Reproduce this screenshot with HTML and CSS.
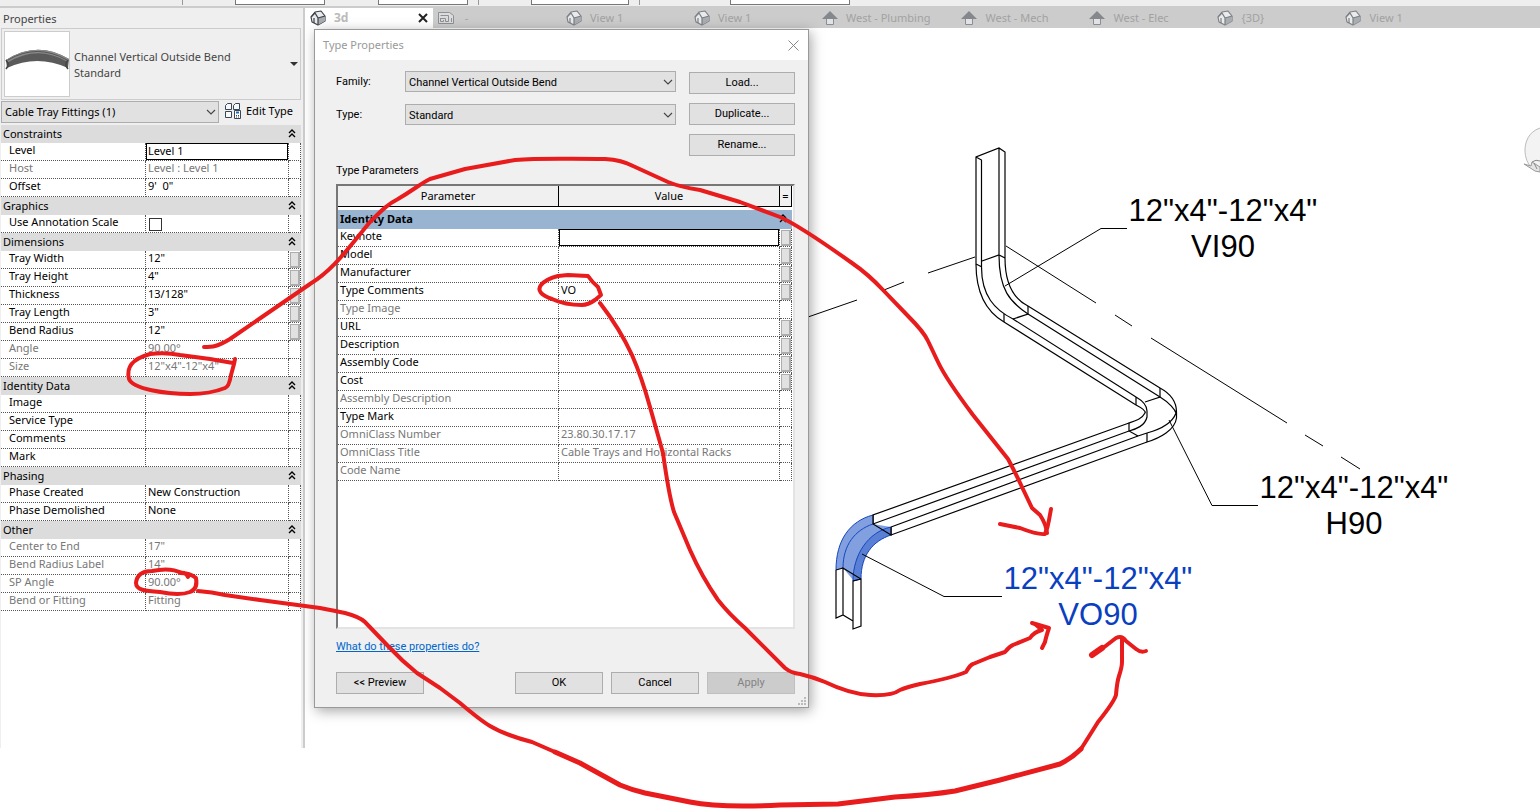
FILE: index.html
```html
<!DOCTYPE html>
<html lang="en">
<head>
  <meta charset="UTF-8" />
  <title>Type Properties</title>
  <link rel="stylesheet" href="styles.css">
</head>
<body>

  <!-- shared icons -->
  <svg class="defs" aria-hidden="true">
    <symbol id="collapse" viewBox="0 0 8 9"><path d="M1 4 4 1 7 4M1 8 4 5 7 8" fill="none" stroke="#000" stroke-width="1.4"/></symbol>
    <symbol id="chevron" viewBox="0 0 10 6"><path d="M1 1 5 5 9 1" fill="none" stroke="#444" stroke-width="1.1"/></symbol>
    <symbol id="house3d" viewBox="0 0 16 16">
      <path d="M1 7 5 2 11 1 15 6V11L8 15 2 12Z" fill="#e8eaec" stroke="currentColor" stroke-width="1.2" stroke-linejoin="round"/>
      <path d="M8 8 15 6V11L8 15Z" fill="#a9adb2"/>
      <path d="M1 7 5 3 8 8V15M8 8 15 6M4 13V8" fill="none" stroke="currentColor" stroke-width="1.2"/>
    </symbol>
    <symbol id="elevation" viewBox="0 0 16 16">
      <path d="M4.500 8H11.500V14.500H4.500Z" fill="#e0e2e6" stroke="#8a8d92"/>
      <path d="M8 1 16 9H0Z" fill="#84878c"/>
    </symbol>
    <symbol id="sheet" viewBox="0 0 16 16">
      <path d="M0.500 2.500H11.500L15.500 5.500V13.500H0.500Z" fill="#dcdcdc" stroke="#8d9094"/>
      <path d="M2.500 5.500H10.500V11.500H7.500V8.500H2.500M2.500 8V11.500H5.500V10M13.500 8V12" fill="none" stroke="#8d9094"/>
    </symbol>
  </svg>

  <div class="options-bar">
    <span class="sep"></span>
    <input class="opt opt-a" aria-label="Offset">
    <input class="opt opt-b" aria-label="Radius">
    <span class="sep"></span>
    <input class="opt opt-c" aria-label="Width">
    <span class="sep"></span>
    <input class="opt opt-d" aria-label="Height">
  </div>

  <div class="workspace">

    <aside class="properties">
      <h2>Properties</h2>
      <div class="type-selector">
        <div class="preview">
          <svg width="64" height="64" viewBox="0 0 64 64" aria-hidden="true">
            <path d="M1 28Q32 8 64 27L63 36Q32 22 2 36Z" fill="#5a5a5a"/>
            <path d="M1 28Q32 8 64 27L63 30Q32 12 2 31Z" fill="#8b8b8b"/>
            <path d="M3 28Q32 11 62 28" fill="none" stroke="#555"/>
            <path d="M1 28 3 31V34L1 37M63 28 61 31V34L63 37" fill="none" stroke="#444" stroke-width="1.500"/>
          </svg>
        </div>
        <div class="type-name">Channel Vertical Outside Bend<br>Standard</div>
        <svg class="drop" width="8" height="4" viewBox="0 0 8 4" aria-hidden="true"><path d="M0 0H8L4 4Z" fill="#333"/></svg>
      </div>

      <div class="filter-row">
        <div class="select-box">
          <select aria-label="Category filter"><option>Cable Tray Fittings (1)</option></select>
          <svg><use href="#chevron"/></svg>
        </div>
        <button class="edit-type">
          <svg width="17" height="17" viewBox="0 0 17 17" fill="none" stroke="#3b4654">
            <path d="M0.500 2.500 2.500 0.500H6.500V6.500H0.500ZM8.500 2.500 10.500 0.500H14.500V6.500H8.500ZM0.500 8.500H6.500V14.500H0.500Z" fill="#f7f8fa"/>
            <path d="M9.500 7.500H15.500V15.500H9.500Z" fill="#fff"/>
            <path d="M11 9.500H14" stroke="#1a6fc4" stroke-width="2"/><path d="M11 12.500H14M11 14H14" stroke-dasharray="1 1"/>
          </svg>
          Edit Type
        </button>
      </div>

      <div class="props-scroll">
        <table class="grid props">
          <colgroup><col class="c-name"><col class="c-value"><col class="c-btn"></colgroup>
          <tr class="group"><th colspan="3">Constraints<svg><use href="#collapse"/></svg></th></tr>
          <tr><td><label for="level">Level</label></td><td class="edit"><input id="level" value="Level 1"></td><td></td></tr>
          <tr class="ro"><td>Host</td><td>Level : Level 1</td><td></td></tr>
          <tr><td>Offset</td><td>9'&nbsp; 0"</td><td></td></tr>
          <tr class="group"><th colspan="3">Graphics<svg><use href="#collapse"/></svg></th></tr>
          <tr><td><label for="scale">Use Annotation Scale</label></td><td><input type="checkbox" id="scale"></td><td></td></tr>
          <tr class="group"><th colspan="3">Dimensions<svg><use href="#collapse"/></svg></th></tr>
          <tr><td>Tray Width</td><td>12"</td><td><button aria-label="Associate Tray Width"></button></td></tr>
          <tr><td>Tray Height</td><td>4"</td><td><button aria-label="Associate Tray Height"></button></td></tr>
          <tr><td>Thickness</td><td>13/128"</td><td><button aria-label="Associate Thickness"></button></td></tr>
          <tr><td>Tray Length</td><td>3"</td><td><button aria-label="Associate Tray Length"></button></td></tr>
          <tr><td>Bend Radius</td><td>12"</td><td><button aria-label="Associate Bend Radius"></button></td></tr>
          <tr class="ro"><td>Angle</td><td>90.00°</td><td></td></tr>
          <tr class="ro"><td>Size</td><td>12"x4"-12"x4"</td><td></td></tr>
          <tr class="group"><th colspan="3">Identity Data<svg><use href="#collapse"/></svg></th></tr>
          <tr><td>Image</td><td></td><td></td></tr>
          <tr><td>Service Type</td><td></td><td></td></tr>
          <tr><td>Comments</td><td></td><td></td></tr>
          <tr><td>Mark</td><td></td><td></td></tr>
          <tr class="group"><th colspan="3">Phasing<svg><use href="#collapse"/></svg></th></tr>
          <tr><td>Phase Created</td><td>New Construction</td><td></td></tr>
          <tr><td>Phase Demolished</td><td>None</td><td></td></tr>
          <tr class="group"><th colspan="3">Other<svg><use href="#collapse"/></svg></th></tr>
          <tr class="ro"><td>Center to End</td><td>17"</td><td></td></tr>
          <tr class="ro"><td>Bend Radius Label</td><td>14"</td><td></td></tr>
          <tr class="ro"><td>SP Angle</td><td>90.00°</td><td></td></tr>
          <tr class="ro"><td>Bend or Fitting</td><td>Fitting</td><td></td></tr>
        </table>
      </div>
    </aside>

    <main class="view">
      <nav class="tabs">
        <a href="#" class="tab active"><svg><use href="#house3d"/></svg><b>3d</b>
          <svg class="close" viewBox="0 0 10 10"><path d="M1 1 9 9M9 1 1 9" stroke="#222" stroke-width="2"/></svg></a>
        <a href="#" class="tab"><svg><use href="#sheet"/></svg>&nbsp;-</a>
        <a href="#" class="tab"><svg><use href="#house3d"/></svg>View 1</a>
        <a href="#" class="tab"><svg><use href="#house3d"/></svg>View 1</a>
        <a href="#" class="tab"><svg><use href="#elevation"/></svg>West - Plumbing</a>
        <a href="#" class="tab"><svg><use href="#elevation"/></svg>West - Mech</a>
        <a href="#" class="tab"><svg><use href="#elevation"/></svg>West - Elec</a>
        <a href="#" class="tab"><svg><use href="#house3d"/></svg>{3D}</a>
        <a href="#" class="tab"><svg><use href="#house3d"/></svg>View 1</a>
      </nav>

      <div class="canvas">
        <svg class="model">
          <g transform="translate(-305 -28)" fill="none" stroke="#000" stroke-width="1.2">
            <!-- reference lines -->
            <path stroke-width="1" d="M808 317 857 300M884 290 904 282M928 273 975 257M1006 246 1096 303M1115 315 1132 326M1151 338 1287 423M1305 435 1323 446M1341 457 1360 469"/>
            <!-- riser -->
            <path d="M976 264V157L999 148 1005 152V258M976 157 981.500 160V267M999 148V255M976 264 982 267M982 261 999 255 1005 258"/>
            <!-- inside bend and first run -->
            <path d="M976 264C976 293 987 312 1004 322L1136 405M981.500 267C981.500 296 995 310 1013 319L1136 397M999 255C999 290 1010 302 1028 314L1160 397M1005 258C1005 285 1014 299 1028 306L1160 388"/>
            <path d="M1004 314V322M1028 306V314L1013 319"/>
            <!-- horizontal bend -->
            <path d="M1136 397V405M1145 402 1160 397V388M1136 397C1143 401 1147 406 1147 411V417C1145 426 1136 429 1129 431M1136 405C1142 408 1146 411 1145 413C1142 419 1135 421 1129 423V431L1138 436"/>
            <path d="M1160 388C1173 395 1176.500 404 1176.500 412V418C1175 430 1160 438 1147 442V433M1160 397C1170 403 1175 410 1176 413C1172 424 1158 430 1147 433"/>
            <!-- second run -->
            <path d="M1129 423 873 515V524L1129 431M1138 436 891 527M1147 433 1138 436M891 527V535L1147 442"/>
            <!-- selected outside bend -->
            <path stroke="none" fill="#829fe0" d="M873 515C850 521 836 540 836 570L843 568 854 581 861 579C861 555 873 541 891 535V527L873 524Z"/>
            <path stroke="none" fill="#5a80d6" d="M891 527C868 532 853 555 853 581L861 579C861 555 873 541 891 535Z"/>
            <path stroke="#1547bd" stroke-width="1" d="M873 515C850 521 836 540 836 570M873 524C855 530 843 545 843 568M891 527C868 532 853 555 853 581M891 535C873 541 861 555 861 579M853 581 861 579"/>
            <path d="M873 515V524L891 535V527"/>
            <!-- drop -->
            <path d="M836 570V618L843 615 853 621M843 615V568L861 579V626L853 629V581L861 579M836 570 843 568"/>
            <!-- tag leaders -->
            <path stroke-width="1" d="M1005 286 1101 228.500H1127M1169 420 1212 505.500H1258M862 554 944 596.500H1002"/>
          </g>
          <g transform="translate(-305 -28)" class="tags">
            <text x="1223" y="221">12"x4"-12"x4"</text>
            <text x="1223" y="257">VI90</text>
            <text x="1354" y="498">12"x4"-12"x4"</text>
            <text x="1354" y="534">H90</text>
            <g class="picked">
              <text x="1098" y="589">12"x4"-12"x4"</text>
              <text x="1098" y="625">VO90</text>
            </g>
          </g>
        </svg>
        <svg class="viewcube" width="17" height="48" viewBox="0 0 17 48" fill="#f3f3f3" stroke="#bbb">
          <path d="M17 2C5 6 2 17 2 24C2 32 5 38 8 41H17"/>
          <path d="M1 38 12 45 17 46V41L9 36 8 40Z" fill="#e4e4e4" stroke="#999"/>
          <path d="M9 36Q13 33 17 35M11 37 14 43" fill="none" stroke="#888"/>
        </svg>
      </div>
    </main>
  </div>

  <section class="dialog" role="dialog" aria-label="Type Properties">
    <header>
      <span>Type Properties</span>
      <button class="dialog-close" aria-label="Close"><svg width="11" height="11" viewBox="0 0 11 11"><path d="M0.500 0.500 10.500 10.500M10.500 0.500 0.500 10.500" stroke="#888"/></svg></button>
    </header>
    <div class="dialog-body">
      <div class="dialog-top">
        <div class="fields">
          <label for="family">Family:</label>
          <div class="select-box"><select id="family"><option>Channel Vertical Outside Bend</option></select><svg><use href="#chevron"/></svg></div>
          <label for="type">Type:</label>
          <div class="select-box"><select id="type"><option>Standard</option></select><svg><use href="#chevron"/></svg></div>
        </div>
        <div class="side-buttons">
          <button class="btn">Load...</button>
          <button class="btn">Duplicate...</button>
          <button class="btn">Rename...</button>
        </div>
      </div>

      <div class="caption">Type Parameters</div>
      <div class="frame">
        <table class="grid params">
          <colgroup><col><col><col class="c-btn"></colgroup>
          <thead><tr><th>Parameter</th><th>Value</th><th>=</th></tr></thead>
          <tbody>
            <tr class="group"><th colspan="3">Identity Data<svg><use href="#collapse"/></svg></th></tr>
            <tr><td><label for="keynote">Keynote</label></td><td class="edit"><input id="keynote"></td><td><button aria-label="Associate Keynote"></button></td></tr>
            <tr><td>Model</td><td></td><td><button aria-label="Associate Model"></button></td></tr>
            <tr><td>Manufacturer</td><td></td><td><button aria-label="Associate Manufacturer"></button></td></tr>
            <tr><td>Type Comments</td><td>VO</td><td><button aria-label="Associate Type Comments"></button></td></tr>
            <tr class="ro"><td>Type Image</td><td></td><td></td></tr>
            <tr><td>URL</td><td></td><td><button aria-label="Associate URL"></button></td></tr>
            <tr><td>Description</td><td></td><td><button aria-label="Associate Description"></button></td></tr>
            <tr><td>Assembly Code</td><td></td><td><button aria-label="Associate Assembly Code"></button></td></tr>
            <tr><td>Cost</td><td></td><td><button aria-label="Associate Cost"></button></td></tr>
            <tr class="ro"><td>Assembly Description</td><td></td><td></td></tr>
            <tr><td>Type Mark</td><td></td><td></td></tr>
            <tr class="ro"><td>OmniClass Number</td><td>23.80.30.17.17</td><td></td></tr>
            <tr class="ro"><td>OmniClass Title</td><td>Cable Trays and Horizontal Racks</td><td></td></tr>
            <tr class="ro"><td>Code Name</td><td></td><td></td></tr>
          </tbody>
        </table>
      </div>

      <a class="help" href="#">What do these properties do?</a>

      <div class="actions">
        <button class="btn preview-btn">&lt;&lt; Preview</button>
        <button class="btn">OK</button>
        <button class="btn">Cancel</button>
        <button class="btn" disabled>Apply</button>
      </div>
    </div>
    <svg class="grip" width="9" height="9" viewBox="0 0 9 9" fill="#bbb"><path d="M6 0H8V2H6ZM3 3H5V5H3ZM6 3H8V5H6ZM0 6H2V8H0ZM3 6H5V8H3ZM6 6H8V8H6Z"/></svg>
  </section>

  <!-- red pen markup -->
  <svg class="markup" aria-hidden="true">
    <g fill="none" stroke="#e81c1c" stroke-width="4" stroke-linecap="round" stroke-linejoin="round">
      <path d="M204 347C212 347 217 347 230 339L262 317 310 284C333 270 346 251 370 222C382 210 388 204 398 199C415 189 420 184 430 179L465 169 515 160C540 158 560 159 605 159Q622 160 633 166L668 182Q680 187 700 190L740 202 780 217Q800 226 852 263Q868 274 883 290L908 316Q924 332 928 341L938 362Q946 379 973 415L1008 459Q1014 470 1022 487L1032 508 1040 515Q1046 524 1047 533"/>
      <path d="M1000 524 1020 528Q1038 535 1045 534Q1048 527 1049 520L1051 509"/>
      <path d="M235 359 234 364 231 375Q229 387 225 388C215 392 200 394 190 394C165 394 133 389 129 379C126 367 132 359 150 354Q165 352 180 355L210 359 233 363"/>
      <path d="M188 577Q186 572 180 573Q190 573 196 578Q198 589 190 592Q180 596 160 592C145 591 136 590 136 583C137 573 145 571 152 571Q170 567 182 573"/>
      <path d="M568 275 588 276Q592 282 598 287L601 295 595 300Q588 305 582 305Q565 305 552 299Q535 293 541 285Q546 279 558 276Z"/>
      <path d="M600 303Q620 329 632 355Q642 378 650 407L663 453Q669 496 674 512L690 550Q702 577 718 600Q729 614 745 628L785 668Q791 673 800 674Q813 677 825 682Q850 694 870 695Q892 696 900 690Q907 687 920 684Q952 678 966 672Q970 665 973 664L990 657 1005 652Q1010 646 1013 645L1030 638Q1034 632 1042 630L1035 624"/>
      <path d="M1032 623 1049 628Q1046 637 1045 642L1042 648"/>
      <path d="M198 591Q212 592 225 595L260 600 320 608Q336 611 345 613Q360 617 365 622L388 646Q402 661 417 673L440 688 460 703Q480 720 490 726Q505 735 532 742L555 752"/>
      <path stroke-width="5" d="M555 752 580 763 620 785Q632 790 645 793L690 802Q720 808 780 805L838 804 895 797Q930 795 955 791L1000 780 1060 764Q1072 758 1081 749"/>
      <path d="M1081 749Q1088 738 1098 722Q1114 702 1116 695Q1117 682 1119 676Q1122 667 1122 662V638"/>
      <path d="M1103 648 1116 638Q1122 635 1126 641L1136 649Q1141 653 1146 651"/>
      <path stroke-width="6" d="M1092 655 1102 648"/>
    </g>
  </svg>

</body>
</html>
```

FILE: styles.css
```css
* {
  box-sizing: border-box;
}
body {
  margin: 0;
  min-height: 100vh;
  position: relative;
  overflow: hidden;
  background: #fff;
  color: #000;
  font-family: "Noto Sans", "Open Sans", sans-serif;
  font-size: 11px;
  line-height: 16px;
}
button, input, select {
  font: inherit;
  color: inherit;
  margin: 0;
  padding: 0;
  border-radius: 0;
}
.defs {
  display: none;
}

/* options bar, scrolled mostly out of sight */
.options-bar {
  display: flex;
  height: 8px;
  padding-left: 182px;
  background: #eee;
  border-bottom: 2px solid #ccc;
}
.opt {
  height: 5px;
  flex: none;
  background: #fff;
  border: 1px solid #777;
  border-top: 0;
}
.sep {
  width: 1px;
  height: 5px;
  background: #999;
}
.opt-a { width: 90px; margin: 0 53px 0 52px; }
.opt-b { width: 90px; margin-right: 10px; }
.opt-c { width: 98px; margin: 0 10px 0 52px; }
.opt-d { width: 120px; margin-left: 90px; }

.workspace {
  display: flex;
  min-height: calc(100vh - 8px);
}

/* properties palette */
.properties {
  flex: none;
  align-self: flex-start;
  width: 305px;
  padding: 0 2px 0 1px;
  background: #efefef;
  border-right: 2px solid #ccc;
}
.properties h2 {
  margin: 0;
  padding: 3px 2px 1px;
  font-size: 11px;
  font-weight: normal;
  color: #444;
}
.type-selector {
  display: flex;
  align-items: center;
  height: 72px;
  padding: 0 2px;
  border: 1px solid #ccc;
}
.preview {
  width: 66px;
  height: 66px;
  background: #fff;
  border: 1px solid #ccc;
}
.type-name {
  flex: 1;
  padding: 2px 0 0 4px;
  color: #444;
}
.filter-row {
  display: flex;
  gap: 6px;
  padding: 1px 0 2px;
}
.filter-row .select-box {
  width: 218px;
  height: 22px;
}
.select-box {
  position: relative;
}
.select-box select {
  appearance: none;
  display: block;
  width: 100%;
  height: 100%;
  padding: 0 3px;
  background: #e1e1e1;
  border: 1px solid #adadad;
}
.select-box svg {
  position: absolute;
  right: 3px;
  top: 8px;
  width: 10px;
  height: 6px;
}
.edit-type {
  display: flex;
  align-items: center;
  gap: 4px;
  height: 20px;
  background: none;
  border: 0;
}
.props-scroll {
  min-height: 623px;
  background: #fff;
}

/* parameter grids */
.grid {
  width: 100%;
  table-layout: fixed;
  border-spacing: 0;
}
.grid td, .grid .group th {
  height: 18px;
  padding: 0 0 0 2px;
  line-height: 16px;
  text-align: left;
  white-space: nowrap;
}
.grid td {
  line-height: 14px;
  vertical-align: top;
  border-bottom: 1px dotted #555;
  border-right: 1px dotted #555;
}
.grid td + td + td {
  padding: 0;
}
.grid .ro {
  color: #777;
}
.grid .edit {
  padding: 0;
}
.grid .edit input {
  display: block;
  width: 100%;
  height: 17px;
  padding: 0 1px 2px;
  border: 1px solid #000;
  background: #fff;
}
.grid td button {
  display: block;
  width: 10px;
  height: 16px;
  margin: 1px 0 0 1px;
  background: #e1e1e1;
  border: 1px solid #adadad;
  border-width: 1px 2px 2px 1px;
}
.grid input[type="checkbox"] {
  appearance: none;
  display: block;
  width: 13px;
  height: 13px;
  margin: 3px 0 0 1px;
  border: 1px solid #333;
}
.group svg {
  float: right;
  width: 8px;
  height: 9px;
  margin: 3px 5px 0 0;
}
.c-btn { width: 12px; }
.c-name { width: 145px; }

.props {
  width: 300px;
}
.props td:first-child {
  padding-left: 8px;
}
.props .group th {
  font-weight: normal;
  background: #dcdcdc;
}

.params thead th {
  height: 21px;
  padding: 0;
  font-weight: normal;
  background: #f0f0f0;
  border-right: 1px solid #000;
  border-bottom: 1px solid #000;
}
.params .group th {
  height: 22px;
  padding-bottom: 2px;
  font-weight: bold;
  background: #99b4d1;
  background-clip: padding-box;
  border-top: 3px solid #fff;
}

/* view tabs and drawing */
.view {
  flex: 1;
  min-width: 0;
  display: flex;
  flex-direction: column;
}
.tabs {
  display: flex;
  height: 20px;
  background: #ccc;
}
.tab {
  display: flex;
  flex: none;
  align-items: center;
  min-width: 128px;
  padding: 0 26px 0 5px;
  color: #a2a2a2;
  text-decoration: none;
}
.tab svg {
  width: 16px;
  height: 16px;
  margin-right: 8px;
  color: #7c7f84;
}
.tab.active {
  padding-right: 5px;
  background: #fff;
  color: #bbb;
  font-size: 12px;
}
.tab.active svg {
  color: #3d4148;
}
.tab.active .close {
  width: 10px;
  height: 10px;
  margin: 0 0 0 auto;
}
.canvas {
  flex: 1;
  position: relative;
}
.model {
  position: absolute;
  width: 100%;
  height: 100%;
}
.tags {
  font-family: "Liberation Sans", Arial, sans-serif;
  font-size: 31px;
  text-anchor: middle;
}
.picked {
  fill: #0a3fbf;
}
.viewcube {
  position: absolute;
  top: 98px;
  right: 0;
}

/* floating dialog */
.dialog {
  position: absolute;
  left: 314px;
  top: 29px;
  width: 495px;
  background: #f0f0f0;
  border: 1px solid #999;
  box-shadow: 2px 3px 12px rgba(0, 0, 0, 0.35);
}
.dialog header {
  display: flex;
  align-items: center;
  justify-content: space-between;
  height: 30px;
  padding: 0 9px 0 8px;
  background: #fff;
  color: #999;
}
.dialog-close {
  display: flex;
  background: none;
  border: 0;
}
.dialog-body {
  padding: 11px 13px 13px 21px;
  font-family: Roboto, "Noto Sans", sans-serif;
}
.dialog-top {
  display: flex;
  gap: 13px;
}
.fields {
  flex: 1;
  display: grid;
  grid-template-columns: 69px 1fr;
  grid-auto-rows: 21px;
  align-content: start;
  row-gap: 12px;
  line-height: 21px;
}
.side-buttons {
  display: flex;
  flex-direction: column;
  gap: 9px;
  width: 106px;
  padding-top: 1px;
}
.btn {
  height: 22px;
  background: #e1e1e1;
  border: 1px solid #adadad;
}
.btn:disabled {
  background: #ccc;
  border-color: #bfbfbf;
  color: #838383;
}
.caption {
  padding: 7px 0 5px;
}
.frame {
  height: 445px;
  padding-right: 1px;
  background: #fff;
  border: 2px solid;
  border-color: #777 #e3e3e3 #e3e3e3 #777;
  font-family: "Noto Sans", "Open Sans", sans-serif;
}
.help {
  display: table;
  margin: 10px 0 17px;
  color: #0066cc;
}
.actions {
  display: flex;
  gap: 8px;
}
.actions .btn {
  width: 88px;
}
.preview-btn {
  margin-right: auto;
}
.grip {
  position: absolute;
  right: 1px;
  bottom: 1px;
}

.markup {
  position: absolute;
  left: 0;
  top: 0;
  width: 100%;
  height: 100%;
  pointer-events: none;
}
```
